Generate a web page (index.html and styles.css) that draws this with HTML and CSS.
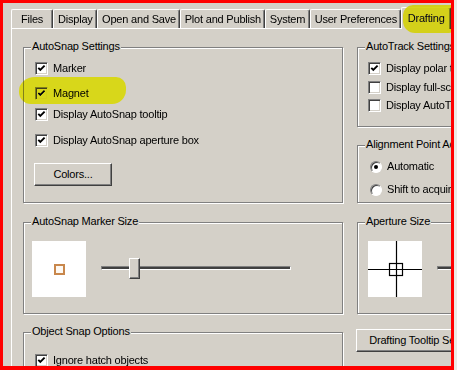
FILE: index.html
```html
<!DOCTYPE html>
<html>
<head>
<meta charset="utf-8">
<link rel="stylesheet" href="styles.css">
</head>
<body>
<div class="frame">
  <div class="tabs">
    <div class="tab">Files</div>
    <div class="tab">Display</div>
    <div class="tab">Open and Save</div>
    <div class="tab">Plot and Publish</div>
    <div class="tab">System</div>
    <div class="tab">User Preferences</div>
    <div class="tab active">Drafting</div>
  </div>
  <div class="hl hl-tab"></div>
  <div class="panel">
    <div class="cols">
      <div class="col col-left">
        <div class="group g-settings">
          <span class="legend">AutoSnap Settings</span>
          <div class="row"><span class="check on"><svg viewBox="0 0 11 11"><path d="M2.3 4.8 L4.3 6.9 L8.6 2.6"/></svg></span><span>Marker</span></div>
          <div class="row mt12 magnet"><span class="hl hl-magnet"></span><span class="check on"><svg viewBox="0 0 11 11"><path d="M2.3 4.8 L4.3 6.9 L8.6 2.6"/></svg></span><span>Magnet</span></div>
          <div class="row mt8"><span class="check on"><svg viewBox="0 0 11 11"><path d="M2.3 4.8 L4.3 6.9 L8.6 2.6"/></svg></span><span>Display AutoSnap tooltip</span></div>
          <div class="row mt13"><span class="check on"><svg viewBox="0 0 11 11"><path d="M2.3 4.8 L4.3 6.9 L8.6 2.6"/></svg></span><span>Display AutoSnap aperture box</span></div>
          <div class="btn btn-colors">Colors...</div>
        </div>
        <div class="group g-size">
          <span class="legend">AutoSnap Marker Size</span>
          <div class="preview"><span class="marker"></span></div>
          <div class="slider slider-marker"><span class="track"></span><span class="thumb"></span></div>
        </div>
        <div class="group g-osnap">
          <span class="legend">Object Snap Options</span>
          <div class="row"><span class="check on"><svg viewBox="0 0 11 11"><path d="M2.3 4.8 L4.3 6.9 L8.6 2.6"/></svg></span><span>Ignore hatch objects</span></div>
        </div>
      </div>
      <div class="col col-right">
        <div class="group g-track">
          <span class="legend">AutoTrack Settings</span>
          <div class="row"><span class="check on"><svg viewBox="0 0 11 11"><path d="M2.3 4.8 L4.3 6.9 L8.6 2.6"/></svg></span><span>Display polar tracking vector</span></div>
          <div class="row mt6"><span class="check"></span><span>Display full-screen tracking vector</span></div>
          <div class="row mt5"><span class="check"></span><span>Display AutoTrack tooltip</span></div>
        </div>
        <div class="group g-align">
          <span class="legend">Alignment Point Acquisition</span>
          <div class="row"><span class="radio on"></span><span>Automatic</span></div>
          <div class="row mt10"><span class="radio"></span><span>Shift to acquire</span></div>
        </div>
        <div class="group g-aperture">
          <span class="legend">Aperture Size</span>
          <div class="preview">
            <svg class="cross" viewBox="0 0 54 56" width="54" height="56">
              <path d="M28.5 0 V56 M0 28.5 H54" />
              <rect x="21.5" y="22.5" width="13" height="12" />
            </svg>
          </div>
          <div class="slider slider-ap"><span class="track"></span></div>
        </div>
        <div class="btn btn-wide">Drafting Tooltip Settings...</div>
        <div class="btn btn-wide mt15">Lights Glyph Settings...</div>
      </div>
    </div>
  </div>
</div>
</body>
</html>
```

FILE: styles.css
```css
html { background: #eceae4; }
body {
  margin: 0;
  font-family: "Liberation Sans", Arial, sans-serif;
  font-size: 11px;
  letter-spacing: -0.2px;
  color: #000;
}
.frame {
  position: relative;
  box-sizing: border-box;
  width: 454px;
  height: 370px;
  border: 3px solid #f00;
  border-bottom-width: 4px;
  background: #d4d0c8;
  overflow: hidden;
}
.tabs {
  display: flex;
  align-items: flex-end;
  height: 19px;
  margin-top: 6px;
  padding-left: 8px;
  position: relative;
  z-index: 2;
}
.tab {
  box-sizing: border-box;
  height: 19px;
  min-width: 42px;
  padding: 0 4px;
  line-height: 18px;
  text-align: center;
  white-space: nowrap;
  border: 1px solid #fff;
  border-right-color: #404040;
  border-bottom: 0;
  border-radius: 2px 2px 0 0;
  box-shadow: inset -1px 0 0 #808080;
  background: #d4d0c8;
}
.tab.active {
  height: 22px;
  margin-bottom: -1px;
  padding: 0 6px;
  line-height: 20px;
}
.panel {
  position: relative;
  z-index: 1;
  margin-left: 8px;
  height: 400px;
  border-top: 1px solid #fff;
  border-left: 1px solid #fff;
  padding: 18px 0 0 11px;
}
.cols {
  display: flex;
  gap: 14px;
}
.col { display: flex; flex-direction: column; flex: none; }
.col-left { width: 320px; }
.col-right { width: 150px; }

.group {
  position: relative;
  box-sizing: border-box;
  border: 1px solid #808080;
  box-shadow: inset 1px 1px 0 #fff, 1px 1px 0 #fff;
  display: flex;
  flex-direction: column;
  align-items: flex-start;
}
.legend {
  position: absolute;
  top: -8px;
  left: 7px;
  padding: 0 1px;
  line-height: 13px;
  background: #d4d0c8;
  white-space: nowrap;
}
.g-settings { height: 156px; padding: 14px 0 0 11px; }
.g-size { height: 92px; margin-top: 19px; flex-direction: row; align-items: center; padding: 0 0 0 8px; }
.g-osnap { height: 60px; margin-top: 18px; padding: 21px 0 0 11px; }
.g-track { height: 80px; padding: 14px 0 0 10px; }
.g-align { height: 58px; margin-top: 18px; padding: 14px 0 0 11px; }
.g-aperture { height: 92px; margin-top: 19px; flex-direction: row; align-items: center; padding: 0 0 0 10px; }

.row {
  position: relative;
  display: flex;
  align-items: center;
  gap: 5px;
  height: 13px;
  line-height: 13px;
  white-space: nowrap;
}
.mt5 { margin-top: 5px; }
.mt6 { margin-top: 6px; }
.mt8 { margin-top: 8px; }
.mt10 { margin-top: 10px; }
.mt12 { margin-top: 12px; }
.mt13 { margin-top: 13px; }
.mt15 { margin-top: 15px; }

.check {
  box-sizing: border-box;
  flex: none;
  width: 13px;
  height: 13px;
  border: 1px solid;
  border-color: #808080 #fff #fff #808080;
  box-shadow: inset 1px 1px 0 #404040, inset -1px -1px 0 #d4d0c8;
  background: #fff;
}
.check svg { display: block; width: 11px; height: 11px; }
.check path { fill: none; stroke: #000; stroke-width: 1.9; }

.radio {
  box-sizing: border-box;
  flex: none;
  position: relative;
  width: 12px;
  height: 12px;
  margin-left: 1px;
  border-radius: 50%;
  border: 1px solid;
  border-color: #808080 #fff #fff #808080;
  box-shadow: inset 1px 1px 0 #404040;
  background: #fff;
}
.radio.on::after {
  content: "";
  position: absolute;
  left: 3px;
  top: 3px;
  width: 4px;
  height: 4px;
  border-radius: 50%;
  background: #000;
}

.btn {
  box-sizing: border-box;
  height: 23px;
  line-height: 20px;
  text-align: center;
  white-space: nowrap;
  border: 1px solid;
  border-color: #fff #404040 #404040 #fff;
  box-shadow: inset -1px -1px 0 #808080;
  background: #d4d0c8;
}
.btn-colors { width: 78px; margin: 16px 0 0 -1px; }
.btn-wide { width: 146px; margin-top: 15px; margin-left: -1px; flex: none; }

.preview {
  flex: none;
  width: 54px;
  height: 56px;
  margin-top: 2px;
  background: #fff;
  display: flex;
  align-items: center;
  justify-content: center;
}
.marker {
  box-sizing: border-box;
  width: 11px;
  height: 11px;
  border: 2px solid #c8874c;
  background: #fdf8f2;
}
.cross { display: block; }
.cross path, .cross rect { fill: none; stroke: #000; stroke-width: 1.2; }

.slider {
  position: relative;
  flex: none;
  height: 21px;
  margin-left: 15px;
  margin-top: 1px;
}
.slider-marker { width: 190px; }
.slider-ap { width: 80px; }
.track {
  position: absolute;
  left: 0;
  right: 0;
  top: 8px;
  height: 4px;
  box-sizing: border-box;
  border: 1px solid;
  border-color: #808080 #fff #fff #808080;
  background: #404040;
}
.thumb {
  position: absolute;
  left: 28px;
  top: 0;
  width: 11px;
  height: 21px;
  box-sizing: border-box;
  border: 1px solid;
  border-color: #fff #404040 #404040 #fff;
  box-shadow: inset -1px -1px 0 #808080;
  background: #d4d0c8;
}

.hl {
  position: absolute;
  background: #d8d71a;
  mix-blend-mode: darken;
  pointer-events: none;
  z-index: 5;
}
.hl-tab {
  left: 400px;
  top: 2px;
  width: 52px;
  height: 28px;
  border-radius: 10px 4px 6px 12px;
}
.hl-magnet {
  left: -16px;
  top: -10px;
  width: 107px;
  height: 27px;
  border-radius: 16px 10px 14px 12px / 14px 10px 14px 12px;
}
```
